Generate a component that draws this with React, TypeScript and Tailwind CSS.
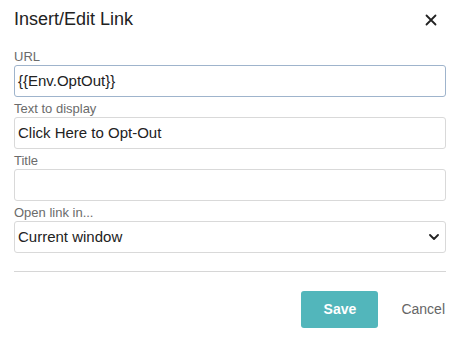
import React from "react";

function Field({ label, children }: { label: string; children: React.ReactNode }) {
  return (
    <div className="flex flex-col">
      <div className="h-4 text-[13px] leading-4 text-[#6b6b6b]">{label}</div>
      {children}
    </div>
  );
}

export default function App() {
  return (
    <div
      className="w-[474px] h-[337px] bg-white pl-[14px] pr-[28px] pt-[7px] overflow-hidden"
      style={{ fontFamily: '"Liberation Sans", Arial, sans-serif' }}
    >
      <div className="flex items-center justify-between h-6">
        <div className="text-[18px] leading-6 text-[#222]">Insert/Edit Link</div>
        <svg width="12" height="12" viewBox="0 0 12 12" className="mr-[9px] mt-[1px]">
          <path d="M1.5 1.5 L10.5 10.5 M10.5 1.5 L1.5 10.5" stroke="#222" strokeWidth="1.8" strokeLinecap="round" />
        </svg>
      </div>
      <div className="mt-[18px] flex flex-col gap-1">
        <Field label="URL">
          <div className="h-8 rounded-[3px] border border-[#9fb4cc] pl-[3px] flex items-center text-[15px] text-[#222]">
            {"{{Env.OptOut}}"}
          </div>
        </Field>
        <Field label="Text to display">
          <div className="h-8 rounded-[3px] border border-[#d9d9d9] pl-[3px] flex items-center text-[15px] text-[#222]">
            Click Here to Opt-Out
          </div>
        </Field>
        <Field label="Title">
          <div className="h-8 rounded-[3px] border border-[#d9d9d9] pl-[3px] flex items-center text-[15px] text-[#222]"></div>
        </Field>
        <Field label="Open link in...">
          <div className="h-8 rounded-[3px] border border-[#d9d9d9] pl-[3px] pr-[6px] flex items-center justify-between text-[15px] text-[#222]">
            <span>Current window</span>
            <svg width="10" height="6" viewBox="0 0 10 6">
              <path d="M1 1 L5 5 L9 1" stroke="#222" strokeWidth="1.8" fill="none" strokeLinecap="round" strokeLinejoin="round" />
            </svg>
          </div>
        </Field>
      </div>
      <div className="mt-[18px] h-px bg-[#d6d6d6]"></div>
      <div className="mt-[19px] flex items-center justify-end gap-[23px]">
        <div className="w-[77px] h-[37px] rounded-[3px] bg-[#52b6bb] flex items-center justify-center text-[14px] font-bold text-white">
          Save
        </div>
        <div className="text-[14px] text-[#666] pr-[1px]">Cancel</div>
      </div>
    </div>
  );
}
